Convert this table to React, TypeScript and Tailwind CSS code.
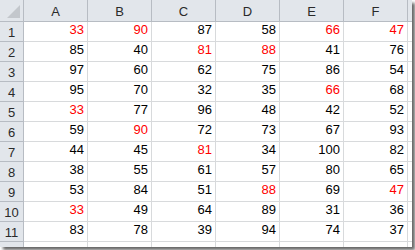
const columns = ["A", "B", "C", "D", "E", "F"];

// [value, isRed]
const rows: [number, boolean][][] = [
  [[33, true], [90, true], [87, false], [58, false], [66, true], [47, true]],
  [[85, false], [40, false], [81, true], [88, true], [41, false], [76, false]],
  [[97, false], [60, false], [62, false], [75, false], [86, false], [54, false]],
  [[95, false], [70, false], [32, false], [35, false], [66, true], [68, false]],
  [[33, true], [77, false], [96, false], [48, false], [42, false], [52, false]],
  [[59, false], [90, true], [72, false], [73, false], [67, false], [93, false]],
  [[44, false], [45, false], [81, true], [34, false], [100, false], [82, false]],
  [[38, false], [55, false], [61, false], [57, false], [80, false], [65, false]],
  [[53, false], [84, false], [51, false], [88, true], [69, false], [47, true]],
  [[33, true], [49, false], [64, false], [89, false], [31, false], [36, false]],
  [[83, false], [78, false], [39, false], [94, false], [74, false], [37, false]],
];

const headerCell =
  "flex items-center justify-center bg-[#e2e6eb] border-r border-b border-[#b7bcc3] text-[13px] text-[#2a2a2a]";

export default function App() {
  return (
    <div className="w-[415px] h-[250px] bg-white overflow-hidden">
      <div
        className="w-[412px] h-[247px] overflow-hidden bg-white shadow-[3px_3px_3px_rgba(0,0,0,0.6)] grid grid-cols-[24px_repeat(6,64px)_1fr] grid-rows-[22px_repeat(11,20px)_1fr] font-['Liberation_Sans',Arial,sans-serif] text-[13px]"
      >
        <div className="relative bg-[#e2e6eb] border-r border-b border-[#b7bcc3]">
          <div className="absolute right-[3px] bottom-[3px] w-0 h-0 border-l-[13px] border-l-transparent border-b-[13px] border-b-[#c3c7cc]" />
        </div>
        {columns.map((c) => (
          <div key={c} className={headerCell + " pt-[3px]"}>
            {c}
          </div>
        ))}
        <div className="bg-[#e2e6eb] border-b border-[#b7bcc3]" />

        {rows.map((row, r) => (
          <div key={r} className="contents">
            <div className={headerCell + " pt-[2px]"}>{r + 1}</div>
            {row.map(([v, red], c) => (
              <div
                key={c}
                className={`flex items-end justify-end pr-[3px] pb-[2px] border-r border-b border-[#d8dadc] ${
                  red ? "text-[#ff0000]" : "text-black"
                }`}
              >
                {v}
              </div>
            ))}
            <div className="border-b border-[#d8dadc]" />
          </div>
        ))}

        <div className="bg-[#e2e6eb] border-r border-[#b7bcc3]" />
        {columns.map((c) => (
          <div key={c} className="border-r border-[#d8dadc]" />
        ))}
        <div />
      </div>
    </div>
  );
}
